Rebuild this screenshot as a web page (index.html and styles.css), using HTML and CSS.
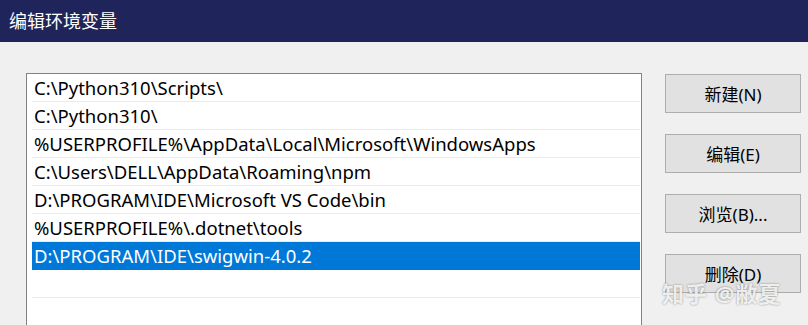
FILE: index.html
```html
<!DOCTYPE html>
<html lang="zh-CN">
<head>
  <meta charset="UTF-8">
  <title>编辑环境变量</title>
  <link rel="stylesheet" href="styles.css">
</head>
<body>
  <div class="title-bar">编辑环境变量</div>
  <div class="dialog">
    <div class="path-list">
      <div class="row">C:\Python310\Scripts\</div>
      <div class="row">C:\Python310\</div>
      <div class="row">%USERPROFILE%\AppData\Local\Microsoft\WindowsApps</div>
      <div class="row">C:\Users\DELL\AppData\Roaming\npm</div>
      <div class="row">D:\PROGRAM\IDE\Microsoft VS Code\bin</div>
      <div class="row">%USERPROFILE%\.dotnet\tools</div>
      <div class="row selected">D:\PROGRAM\IDE\swigwin-4.0.2</div>
      <div class="row"></div>
    </div>
    <div class="actions">
      <button class="btn">新建(N)</button>
      <button class="btn">编辑(E)</button>
      <button class="btn">浏览(B)...</button>
      <button class="btn">删除(D)</button>
    </div>
  </div>
  <div class="watermark">知乎 @敝夏</div>
</body>
</html>
```

FILE: styles.css
```css
html, body {
  margin: 0;
  height: 100%;
  overflow: hidden;
}
body {
  background: #f0f0f0;
  font-family: "Noto Sans", "Noto Sans CJK SC", sans-serif;
  color: #000;
  position: relative;
}
.title-bar {
  height: 42px;
  background: #1f245a;
  color: #fff;
  font-size: 18px;
  line-height: 42px;
  padding-left: 9px;
}
.dialog {
  display: flex;
  align-items: flex-start;
  padding: 31px 0 0 26px;
}
.path-list {
  width: 616px;
  height: 252px;
  background: #fff;
  border: 1px solid #828282;
  border-bottom: none;
  padding: 0 1px 0 5px;
  box-sizing: border-box;
  overflow: hidden;
}
.row {
  height: 28px;
  box-sizing: border-box;
  line-height: 27px;
  border-bottom: 1px solid #ebebeb;
  font-size: 18.5px;
  padding-left: 2px;
  white-space: nowrap;
}
.row.selected {
  background: #0078d7;
  color: #fff;
  border-bottom-color: #0078d7;
}
.actions {
  display: flex;
  flex-direction: column;
  gap: 21px;
  margin-left: 23px;
  padding-top: 1px;
}
.btn {
  width: 136px;
  height: 39px;
  background: #e1e1e1;
  border: 1px solid #adadad;
  font-family: inherit;
  font-size: 17px;
  color: #000;
  padding: 0;
}
.watermark {
  position: absolute;
  left: 662px;
  top: 276px;
  font-size: 22px;
  font-weight: bold;
  color: rgba(255, 255, 255, 0.85);
  text-shadow: 0 0 2px rgba(0, 0, 0, 0.45);
  letter-spacing: 1px;
}
```
